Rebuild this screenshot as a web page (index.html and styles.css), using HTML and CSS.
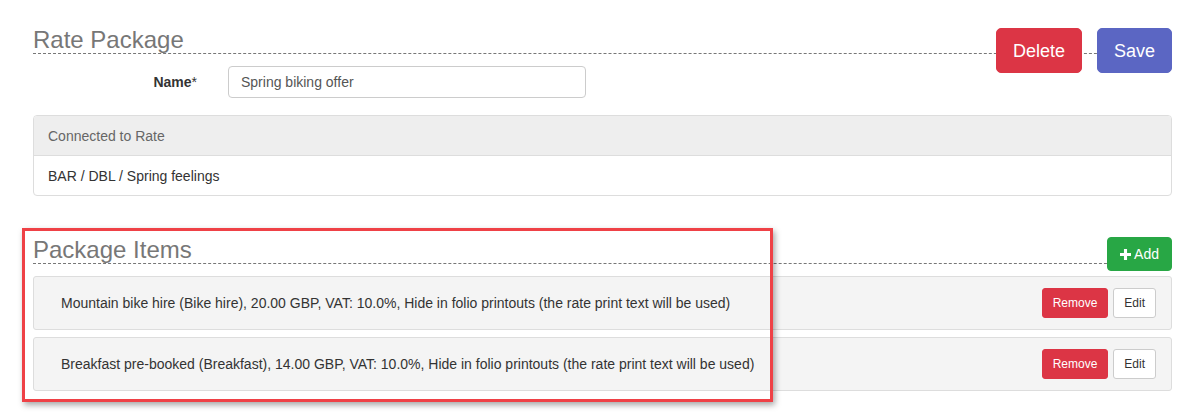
FILE: index.html
```html
<!DOCTYPE html>
<html>
<head>
<meta charset="utf-8">
<link rel="stylesheet" href="styles.css">
</head>
<body>
<div class="page">
  <div class="section-head first">
    <h2 class="title">Rate Package</h2>
    <div class="head-actions">
      <button class="btn btn-lg btn-danger">Delete</button>
      <button class="btn btn-lg btn-primary">Save</button>
    </div>
  </div>

  <div class="form-row">
    <label class="form-label">Name<span class="req">*</span></label>
    <div class="input">Spring biking offer</div>
  </div>

  <div class="card">
    <div class="card-header">Connected to Rate</div>
    <div class="card-body">BAR / DBL / Spring feelings</div>
  </div>

  <div class="section-head second">
    <h2 class="title">Package Items</h2>
    <div class="head-actions">
      <button class="btn btn-success btn-add"><svg class="plus" viewBox="0 0 12 12" width="11" height="11"><path d="M4.3 0h3.4v4.3H12v3.4H7.7V12H4.3V7.7H0V4.3h4.3z" fill="#fff"/></svg>Add</button>
    </div>
  </div>

  <div class="items">
    <div class="item">
      <div class="item-text">Mountain bike hire (Bike hire), 20.00 GBP, VAT: 10.0%, Hide in folio printouts (the rate print text will be used)</div>
      <div class="item-actions">
        <button class="btn btn-sm btn-danger">Remove</button>
        <button class="btn btn-sm btn-default">Edit</button>
      </div>
    </div>
    <div class="item">
      <div class="item-text">Breakfast pre-booked (Breakfast), 14.00 GBP, VAT: 10.0%, Hide in folio printouts (the rate print text will be used)</div>
      <div class="item-actions">
        <button class="btn btn-sm btn-danger">Remove</button>
        <button class="btn btn-sm btn-default">Edit</button>
      </div>
    </div>
  </div>

  <div class="highlight"></div>
</div>
</body>
</html>
```

FILE: styles.css
```css
* { box-sizing: border-box; }
html, body { margin: 0; padding: 0; background: #fff; }
body {
  font-family: "Liberation Sans", Arial, Helvetica, sans-serif;
  font-size: 14px;
  color: #333;
}
.page {
  position: relative;
  padding: 0 26px 0 33px;
  height: 417px;
}
.section-head {
  display: flex;
  align-items: flex-end;
  justify-content: space-between;
  border-bottom: 1px dashed #777;
}
.section-head.first { padding-top: 27px; }
.section-head.second { margin-top: 41px; }
.title {
  margin: 0;
  font-size: 24px;
  font-weight: normal;
  line-height: 26px;
  height: 26px;
  color: #777;
}
.head-actions {
  display: flex;
  gap: 15px;
  position: relative;
  z-index: 1;
}
.first .head-actions { margin-bottom: -20px; }
.second .head-actions { margin-bottom: -8px; }

.btn {
  font-family: inherit;
  border: 1px solid transparent;
  color: #fff;
  cursor: pointer;
  display: inline-flex;
  align-items: center;
  justify-content: center;
  line-height: 1;
}
.btn-lg {
  height: 45px;
  font-size: 18px;
  padding: 0 16px;
  border-radius: 5px;
}
.btn-danger { background: #dc3545; border-color: #dc3545; }
.btn-primary { background: #5b66c3; border-color: #5b66c3; min-width: 75px; }
.btn-success { background: #28a745; border-color: #28a745; }
.btn-add {
  height: 34px;
  font-size: 14px;
  padding: 0 12px 0 12px;
  border-radius: 4px;
  gap: 3px;
}
.plus { display: block; }
.btn-sm {
  height: 30px;
  font-size: 12px;
  padding: 0 10px;
  border-radius: 3px;
}
.btn-default {
  background: #fff;
  color: #333;
  border-color: #ccc;
}

.form-row {
  display: grid;
  grid-template-columns: 164px 358px;
  column-gap: 31px;
  align-items: center;
  margin-top: 12px;
}
.form-label {
  text-align: right;
  font-weight: bold;
  color: #333;
}
.req { font-weight: normal; }
.input {
  height: 32px;
  border: 1px solid #ccc;
  border-radius: 4px;
  padding: 0 12px;
  display: flex;
  align-items: center;
  color: #555;
}

.card {
  margin-top: 17px;
  border: 1px solid #ddd;
  border-radius: 4px;
  overflow: hidden;
}
.card-header {
  height: 40px;
  background: #eee;
  border-bottom: 1px solid #ddd;
  padding: 0 14px;
  display: flex;
  align-items: center;
  color: #666;
}
.card-body {
  height: 39px;
  padding: 0 14px;
  display: flex;
  align-items: center;
  color: #333;
}

.items {
  display: flex;
  flex-direction: column;
  gap: 7px;
  margin-top: 12px;
}
.item {
  display: flex;
  align-items: center;
  justify-content: space-between;
  background: #f4f4f4;
  border: 1px solid #ddd;
  border-radius: 3px;
  padding: 11px 15px 11px 27px;
  height: 54px;
}
.item-actions {
  display: flex;
  gap: 5px;
}

.highlight {
  position: absolute;
  left: 22px;
  top: 228px;
  width: 751px;
  height: 174px;
  border: 3px solid #ef4146;
  box-shadow: 2px 3px 6px rgba(0, 0, 0, 0.35);
  pointer-events: none;
}
```
